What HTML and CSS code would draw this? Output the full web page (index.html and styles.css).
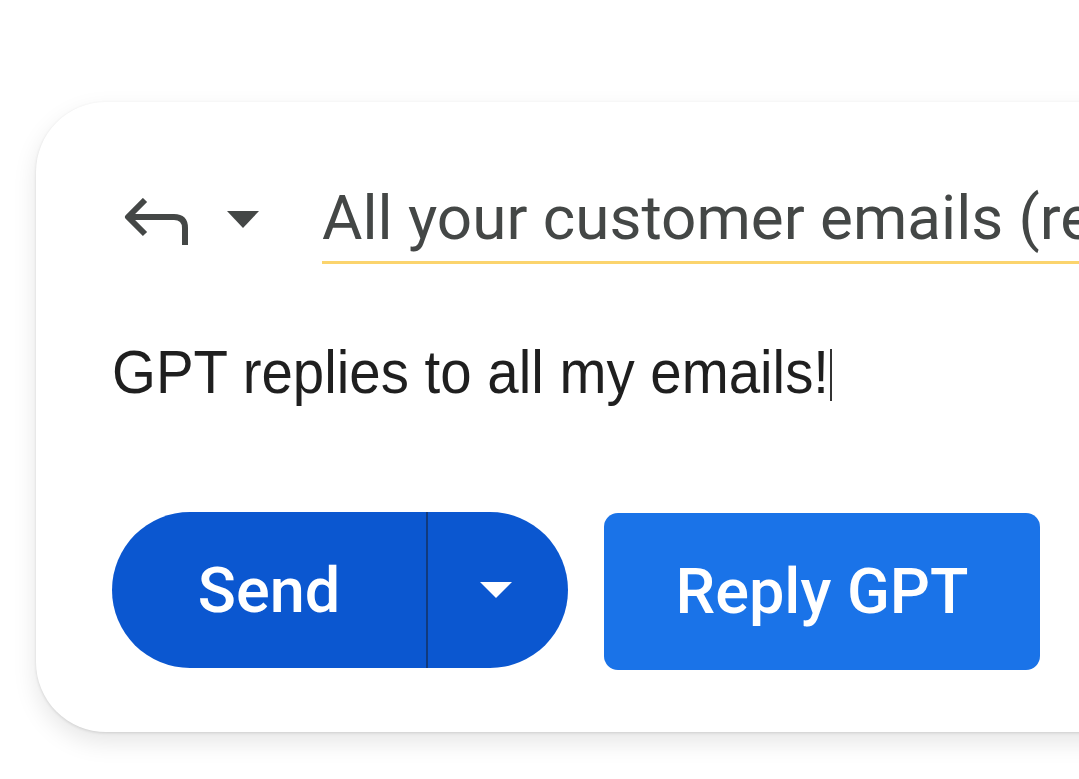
FILE: index.html
```html
<!DOCTYPE html>
<html lang="en">
<head>
<meta charset="utf-8">
<title>Reply GPT</title>
<link rel="stylesheet" href="styles.css">
</head>
<body>
<div class="card">
  <div class="header">
    <svg class="reply-icon" width="66" height="50" viewBox="0 0 66 50" aria-hidden="true">
      <path d="M21 2 L4 19 L21 36 M4 19 H50 Q61 19 61 30 V47" fill="none" stroke="#444746" stroke-width="6" stroke-linejoin="round" stroke-linecap="butt"/>
    </svg>
    <svg class="caret" width="32" height="17" viewBox="0 0 32 17" aria-hidden="true">
      <path d="M0 0 H32 L16 17 Z" fill="#444746"/>
    </svg>
    <div class="subject"><span class="subject-text">All your customer emails (re</span></div>
  </div>
  <div class="body-text"><span class="body-inner">GPT replies to all my emails!</span><span class="cursor"></span></div>
  <div class="actions">
    <div class="send">
      <span class="send-main">Send</span>
      <span class="send-more">
        <svg width="32" height="16" viewBox="0 0 32 16" aria-hidden="true"><path d="M0 0 H32 L16 16 Z" fill="#ffffff"/></svg>
      </span>
    </div>
    <div class="reply-gpt">Reply GPT</div>
  </div>
</div>
</body>
</html>
```

FILE: styles.css
```css
html, body {
  margin: 0;
  padding: 0;
  background: #ffffff;
  overflow: hidden;
  width: 1079px;
  height: 779px;
}

.card {
  margin: 102px 0 0 36px;
  width: 1200px;
  height: 630px;
  box-sizing: border-box;
  background: #ffffff;
  border-radius: 70px 0 0 70px;
  box-shadow: 0 1px 3px rgba(0, 0, 0, 0.12), 0 10px 24px rgba(0, 0, 0, 0.10);
  padding: 79px 0 0 76px;
}

.header {
  display: flex;
  align-items: center;
  padding-left: 12px;
}

.reply-icon {
  display: block;
  flex: none;
}

.caret {
  display: block;
  flex: none;
  margin-left: 37px;
  margin-top: -6px;
}

.subject {
  flex: 1;
  margin-left: 63px;
  padding-bottom: 6px;
  border-bottom: 3px solid #fbd46d;
  white-space: nowrap;
  overflow: hidden;
}

.subject-text {
  font-family: Roboto, "Liberation Sans", sans-serif;
  font-size: 62px;
  line-height: 74px;
  color: #444746;
}

.body-text {
  margin-top: 72px;
  display: flex;
  align-items: center;
  height: 72px;
}

.body-inner {
  font-family: "Liberation Sans", Arial, sans-serif;
  font-size: 61px;
  line-height: 72px;
  color: #1f1f1f;
  display: inline-block;
  transform: scaleX(0.925);
  transform-origin: 0 50%;
  white-space: nowrap;
  width: 716px;
}

.cursor {
  display: block;
  width: 2px;
  height: 52px;
  background: #333333;
  margin-left: 2px;
  margin-top: 6px;
}

.actions {
  display: flex;
  align-items: flex-start;
  gap: 36px;
  margin-top: 104px;
}

.send {
  display: flex;
  height: 156px;
  background: #0b57d0;
  border-radius: 78px;
  overflow: hidden;
  color: #ffffff;
  font-family: Roboto, "Liberation Sans", sans-serif;
  font-weight: 500;
  font-size: 63px;
}

.send-main {
  width: 316px;
  display: flex;
  align-items: center;
  justify-content: center;
  border-right: 2px solid #113a7d;
  box-sizing: border-box;
}

.send-more {
  width: 140px;
  display: flex;
  align-items: center;
  justify-content: center;
  padding-right: 4px;
  box-sizing: border-box;
}

.reply-gpt {
  width: 436px;
  height: 157px;
  margin-top: 1px;
  background: #1a73e8;
  border-radius: 14px;
  color: #ffffff;
  font-family: Roboto, "Liberation Sans", sans-serif;
  font-weight: 500;
  font-size: 63px;
  display: flex;
  align-items: center;
  justify-content: center;
}
```
